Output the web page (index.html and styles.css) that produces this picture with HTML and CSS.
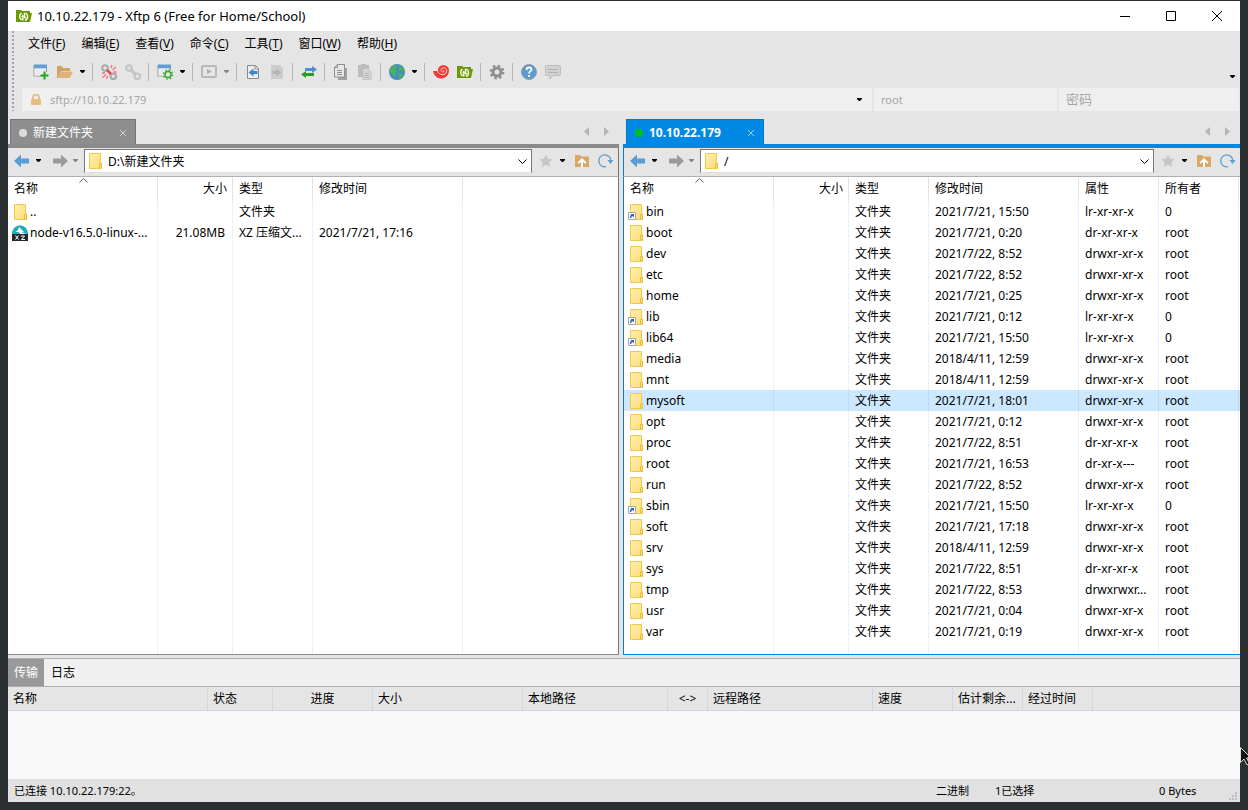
FILE: index.html
```html
<!DOCTYPE html>
<html lang="zh-CN">
<head>
    <meta charset="UTF-8">
    <meta name="viewport" content="width=device-width, initial-scale=1.0">
    <title>10.10.22.179 - Xftp 6</title>
    <link rel="stylesheet" href="styles.css">
</head>
<body>
    <!-- 图标 -->
    <svg class="sprite" aria-hidden="true">
        <linearGradient id="folderFill" x1="0" y1="0" x2="1" y2="1">
            <stop offset="0" stop-color="#ffeeae"/>
            <stop offset="1" stop-color="#ffdd75"/>
        </linearGradient>
        <symbol id="i-logo" viewBox="0 0 16 16">
            <path d="M0 2h5l1 1h8v2h2l-2 9H0z" fill="#6b9a08"/>
            <path d="M5.500 5.200C3 6.500 3 10.500 5.800 12M6.800 12.500V8M8.500 4.800v4.500M9 12.200c3.200-.8 3.500-5.500.5-7.200" fill="none" stroke="#fff" stroke-width="1.400"/>
            <path d="M5 9l1.800-2.500L8 8.500zM7.500 9h3L9 11z" fill="#fff"/>
        </symbol>
        <symbol id="i-new" viewBox="0 0 16 16">
            <path d="M1 1v11h8M13.500 1v7" fill="none" stroke="#969696"/>
            <path d="M1 .5h13v4H1z" fill="#5f9fd6"/>
            <path d="M1.500 4.500h11.500v4H9v3H1.500z" fill="#ececec"/>
            <path d="M11.500 7.500v8M7.500 11.500h8" stroke="#22a722" stroke-width="2"/>
        </symbol>
        <symbol id="i-open" viewBox="0 0 16 16">
            <path d="M0 2h5l1 2h7v3H4l-3 7H0z" fill="#d2a264"/>
            <path d="M4 7.500h12L13 14H1z" fill="#dfb27a"/>
        </symbol>
        <symbol id="i-cut" viewBox="0 0 16 16">
            <g fill="none" stroke="#a9a9a9" stroke-width="2">
                <circle cx="4" cy="4" r="2.800"/><circle cx="12.300" cy="12.300" r="2.800"/>
            </g>
            <path d="M6 6l4 4" stroke="#e0484d" stroke-width="2.500"/>
            <path d="M10 4l1-3M11.500 6l3.500-3M12.500 8h3M6.500 12l-1 3M5 10.500l-3.500 3M4 9H1" stroke="#ef7377" stroke-width="1.300"/>
        </symbol>
        <symbol id="i-link" viewBox="0 0 16 16">
            <g fill="none" stroke="#c4c4c4" stroke-width="2">
                <circle cx="4" cy="4" r="2.800"/><circle cx="12.300" cy="12.300" r="2.800"/>
                <path d="M5 5l6 6" stroke-width="3"/>
            </g>
        </symbol>
        <symbol id="i-props" viewBox="0 0 16 16">
            <path d="M1 1v11h6M13.500 1v5" fill="none" stroke="#969696"/>
            <path d="M1 .5h13v4H1z" fill="#5f9fd6"/>
            <path d="M1.500 4.500h11.500v3H7v4H1.500z" fill="#ececec"/>
            <circle cx="11" cy="10.500" r="3" fill="none" stroke="#3aa83a" stroke-width="1.500"/>
            <circle cx="11" cy="10.500" r="4.500" fill="none" stroke="#3aa83a" stroke-width="1.500" stroke-dasharray="1.700 1.830"/>
        </symbol>
        <symbol id="i-play" viewBox="0 0 16 16">
            <rect x="1" y="2" width="14" height="11" rx="1" fill="none" stroke="#b9b9b9" stroke-width="2"/>
            <path d="M6 5l5 2.500L6 10z" fill="#b0b0b0"/>
        </symbol>
        <symbol id="i-pageleft" viewBox="0 0 16 16">
            <path d="M2.500 1.500h8l3 3v10h-11z" fill="#ececec" stroke="#8b8b8b"/>
            <path d="M10 1.500v3.500h3.500" fill="none" stroke="#8b8b8b"/>
            <path d="M3.500 8.500l5-4v2.500h4v3h-4v2.500z" fill="#3e87cf"/>
        </symbol>
        <symbol id="i-pageright" viewBox="0 0 16 16">
            <path d="M2 1h9l3 3v11H2z" fill="#cdcdcd"/>
            <path d="M12.500 8.500l-5-4v2.500h-4v3h4v2.500z" fill="#b4b4b4"/>
        </symbol>
        <symbol id="i-sync" viewBox="0 0 16 16">
            <path d="M4 4h7V2l5 3.500L11 9V7H4z" fill="#4a90d2"/>
            <path d="M13 9H5V7l-5 3.500L5 14v-2h8z" fill="#24a124"/>
        </symbol>
        <symbol id="i-copy" viewBox="0 0 16 16">
            <path d="M5 4h9v12H5z" fill="#a2a2a2"/>
            <path d="M4.500.5H11.500v12.500H1.500V3.500z" fill="#e8e8e8" stroke="#8f8f8f"/>
            <path d="M1.500 3.500h3v-3M4 6.500h5M4 8.500h5M4 10.500h5" fill="none" stroke="#8f8f8f"/>
        </symbol>
        <symbol id="i-paste" viewBox="0 0 16 16">
            <path d="M1 1h3V0h5v1h3v12H1z" fill="#bdbdbd"/>
            <path d="M6 4.500h5l3 3V15.500H6z" fill="#d5d5d5" stroke="#c1c1c1"/>
            <path d="M8 9.500h4M8 11.500h4M8 13.500h4" stroke="#b5b5b5"/>
        </symbol>
        <symbol id="i-globe" viewBox="0 0 16 16">
            <circle cx="8" cy="8" r="8" fill="#4a88ca"/>
            <path d="M1 4.500l4-3.500 3-.5-1 2.500 1 1-2 1.500 2 2.500-1.500 1 .5 2-2 2.500-1.500-3L1 8zM10 2.500l3.500 0 2 4-1.500 1.500-1.500-1.500-2 .5-1-2zM9.500 9.500l3-1 1.500 2-1.500 3-2.500 1z" fill="#45b45a"/>
        </symbol>
        <symbol id="i-shell" viewBox="0 0 16 16">
            <path d="M0 7h4.500L6 9l5 2 4.500-4c.5 4-3 7-6.500 7.500C5 15 1 12 0 7z" fill="#ef3b36"/>
            <circle cx="10.500" cy="6.500" r="5.500" fill="#ef3b36"/>
            <path d="M4.500 7c1.500 3.500 5 4.500 7.500 3 3-2 1.800-6.300-1.500-6.200-2.700.2-3.200 3.700-.8 4.200 1.500.2 2-1.300.8-1.800" fill="none" stroke="#ffd3d0" stroke-width="1"/>
        </symbol>
        <symbol id="i-gear" viewBox="0 0 16 16">
            <circle cx="8" cy="8" r="4" fill="none" stroke="#8e8e8e" stroke-width="3"/>
            <circle cx="8" cy="8" r="6.300" fill="none" stroke="#8e8e8e" stroke-width="2.200" stroke-dasharray="2.470 2.470"/>
        </symbol>
        <symbol id="i-help" viewBox="0 0 16 16">
            <circle cx="8" cy="8" r="7.500" fill="#5b9ad2" stroke="#9a9a9a"/>
            <path d="M5.500 6c0-3.500 5-3 5-.5 0 1.700-2.500 1.700-2.500 4M8 11v2" fill="none" stroke="#fff" stroke-width="1.800"/>
        </symbol>
        <symbol id="i-chat" viewBox="0 0 16 16">
            <path d="M1.500 1.500h13q1 0 1 1v8q0 1-1 1H8L5 15v-3.500H1.500q-1 0-1-1v-8q0-1 1-1z" fill="#d2d2d2" stroke="#bdbdbd"/>
            <path d="M3 5.500h10M3 8.500h10" stroke="#b2b2b2"/>
        </symbol>
        <symbol id="i-lock" viewBox="0 0 12 12">
            <path d="M3 6V3.500a3 3 0 0 1 6 0V6" fill="none" stroke="#e5be86" stroke-width="1.800"/>
            <rect x="1" y="5" width="10" height="6" rx="1" fill="#e8bd7d"/>
        </symbol>
        <symbol id="i-caret" viewBox="0 0 5 3"><path d="M0 0h5v1L3 3H2L0 1z" fill="currentColor"/></symbol>
        <symbol id="i-back" viewBox="0 0 16 14">
            <path d="M0 7l7-6.500v4h8v5H7v4z" fill="#5b9ed6"/>
        </symbol>
        <symbol id="i-forward" viewBox="0 0 16 14">
            <path d="M16 7L9 .5v4H1v5h8v4z" fill="#9b9b9b"/>
        </symbol>
        <symbol id="i-star" viewBox="0 0 14 14">
            <path d="M7 .5l2 4.200 4.500.6-3.300 3.200.8 4.600-4-2.300-4 2.300.8-4.600L.5 5.300 5 4.700z" fill="#c6c6c6"/>
        </symbol>
        <symbol id="i-up" viewBox="0 0 14 12">
            <path d="M0 0h5l1 1.500h8V12H0z" fill="#d9a866"/>
            <path d="M7 3l4.500 4.500-1.200 1.200L8 6.800V12H6V6.800L3.700 8.700 2.500 7.500z" fill="#fff"/>
        </symbol>
        <symbol id="i-refresh" viewBox="0 0 16 14">
            <path d="M8 12.700A6 6 0 1 1 12.800 7" fill="none" stroke="#5b9ed6" stroke-width="1.300"/>
            <path d="M9.500 6h6L12.500 10z" fill="#5b9ed6"/>
        </symbol>
        <symbol id="i-folder" viewBox="0 0 16 16">
            <path d="M2.500.5h11v9.500h1v5.500h-12z" fill="url(#folderFill)" stroke="#efc84c"/>
            <path d="M12.500 15V10.500h2V15z" fill="#ffe48a" stroke="#e9bd3c"/>
        </symbol>
        <symbol id="i-link-folder" viewBox="0 0 16 16">
            <use href="#i-folder"/>
            <path d="M.5 8.500h7v7h-7z" fill="#fff" stroke="#a5a5a5"/>
            <path d="M2.500 14c0-1.500.5-2.500 2-3" fill="none" stroke="#2a62ad" stroke-width="1.500"/>
            <path d="M2.500 10H6v3.500z" fill="#2a62ad"/>
        </symbol>
        <symbol id="i-xz" viewBox="0 0 16 16">
            <path d="M0 9a8 8.700 0 0 1 16 0z" fill="#1faeb8"/>
            <path d="M7 2l5 5h-2.500l4.500 2H8.500L6.500 7H3.500L6 5z" fill="#fff"/>
            <path d="M0 9h16v7H0z" fill="#26292b"/>
            <path d="M3.500 10.500l3 4M6.500 10.500l-3 4M9 11h3.500L9.500 14.500H13" fill="none" stroke="#fff"/>
        </symbol>
        <symbol id="i-chevron" viewBox="0 0 9 5"><path d="M.5.5l4 4 4-4" fill="none" stroke="currentColor"/></symbol>
        <symbol id="i-close" viewBox="0 0 10 10"><path d="M0 0l10 10M10 0L0 10" stroke="currentColor" fill="none"/></symbol>
        <symbol id="i-left" viewBox="0 0 5 9"><path d="M5 0v9L0 4.500z" fill="#b5b5b5"/></symbol>
        <symbol id="i-right" viewBox="0 0 5 9"><path d="M0 0v9l5-4.500z" fill="#b5b5b5"/></symbol>
    </svg>

    <div class="window">
        <header class="titlebar">
            <svg class="icon"><use href="#i-logo"/></svg>
            <h1>10.10.22.179 - Xftp 6 (Free for Home/School)</h1>
            <button class="win-btn" aria-label="最小化"><svg width="10" height="10"><path d="M0 5.500h10" stroke="#000"/></svg></button>
            <button class="win-btn" aria-label="最大化"><svg width="10" height="10"><path d="M.5.5h9v9h-9z" fill="none" stroke="#000"/></svg></button>
            <button class="win-btn" aria-label="关闭"><svg width="10" height="10"><use href="#i-close"/></svg></button>
        </header>

        <!-- 菜单 -->
        <nav class="menubar grip">
            <button>文件(<u>F</u>)</button>
            <button>编辑(<u>E</u>)</button>
            <button>查看(<u>V</u>)</button>
            <button>命令(<u>C</u>)</button>
            <button>工具(<u>T</u>)</button>
            <button>窗口(<u>W</u>)</button>
            <button>帮助(<u>H</u>)</button>
        </nav>

        <div class="tools grip">
            <div class="toolbar">
                <button class="tool" aria-label="新建"><svg class="icon"><use href="#i-new"/></svg></button>
                <button class="tool" aria-label="打开"><svg class="icon"><use href="#i-open"/></svg></button>
                <button class="drop" aria-label="打开列表"><svg class="caret"><use href="#i-caret"/></svg></button>
                <span class="sep"></span>
                <button class="tool" aria-label="断开"><svg class="icon"><use href="#i-cut"/></svg></button>
                <button class="tool" aria-label="重新连接"><svg class="icon"><use href="#i-link"/></svg></button>
                <span class="sep"></span>
                <button class="tool" aria-label="属性"><svg class="icon"><use href="#i-props"/></svg></button>
                <button class="drop" aria-label="属性列表"><svg class="caret"><use href="#i-caret"/></svg></button>
                <span class="sep"></span>
                <button class="tool" aria-label="终端"><svg class="icon"><use href="#i-play"/></svg></button>
                <button class="drop dim" aria-label="终端列表"><svg class="caret"><use href="#i-caret"/></svg></button>
                <span class="sep"></span>
                <button class="tool" aria-label="向左传输"><svg class="icon"><use href="#i-pageleft"/></svg></button>
                <button class="tool" aria-label="向右传输"><svg class="icon"><use href="#i-pageright"/></svg></button>
                <span class="sep"></span>
                <button class="tool" aria-label="同步"><svg class="icon"><use href="#i-sync"/></svg></button>
                <span class="sep"></span>
                <button class="tool" aria-label="复制"><svg class="icon"><use href="#i-copy"/></svg></button>
                <button class="tool" aria-label="粘贴"><svg class="icon"><use href="#i-paste"/></svg></button>
                <span class="sep"></span>
                <button class="tool" aria-label="编码"><svg class="icon"><use href="#i-globe"/></svg></button>
                <button class="drop" aria-label="编码列表"><svg class="caret"><use href="#i-caret"/></svg></button>
                <span class="sep"></span>
                <button class="tool" aria-label="Xshell"><svg class="icon"><use href="#i-shell"/></svg></button>
                <button class="tool" aria-label="Xftp"><svg class="icon"><use href="#i-logo"/></svg></button>
                <span class="sep"></span>
                <button class="tool" aria-label="选项"><svg class="icon"><use href="#i-gear"/></svg></button>
                <span class="sep"></span>
                <button class="tool" aria-label="帮助"><svg class="icon"><use href="#i-help"/></svg></button>
                <button class="tool" aria-label="反馈"><svg class="icon"><use href="#i-chat"/></svg></button>
                <button class="drop overflow" aria-label="更多"><svg class="caret"><use href="#i-caret"/></svg></button>
            </div>
            <form class="address">
                <div class="field host">
                    <svg class="lock"><use href="#i-lock"/></svg>
                    <input type="text" value="sftp://10.10.22.179" aria-label="主机">
                    <button type="button" class="drop" aria-label="历史"><svg class="caret"><use href="#i-caret"/></svg></button>
                </div>
                <div class="field"><input type="text" value="root" aria-label="用户名"></div>
                <div class="field"><input type="password" placeholder="密码" aria-label="密码"></div>
            </form>
        </div>

        <main class="panes">
            <!-- 本地 -->
            <section class="pane local">
                <div class="tabs">
                    <button class="tab"><span class="dot"></span>新建文件夹<svg class="tab-close"><use href="#i-close"/></svg></button>
                    <button class="scroll" aria-label="向左"><svg width="5" height="9"><use href="#i-left"/></svg></button>
                    <button class="scroll" aria-label="向右"><svg width="5" height="9"><use href="#i-right"/></svg></button>
                </div>
                <div class="navbar">
                    <button class="go" aria-label="后退"><svg width="16" height="14"><use href="#i-back"/></svg></button>
                    <button class="nav-drop" aria-label="后退列表"><svg class="caret"><use href="#i-caret"/></svg></button>
                    <button class="go" aria-label="前进"><svg width="16" height="14"><use href="#i-forward"/></svg></button>
                    <button class="nav-drop dim" aria-label="前进列表"><svg class="caret"><use href="#i-caret"/></svg></button>
                    <div class="path">
                        <svg class="icon"><use href="#i-folder"/></svg>
                        <input type="text" value="D:\新建文件夹" aria-label="本地路径">
                        <svg width="9" height="5"><use href="#i-chevron"/></svg>
                    </div>
                    <button class="star" aria-label="收藏"><svg width="14" height="14"><use href="#i-star"/></svg></button>
                    <button class="nav-drop" aria-label="收藏列表"><svg class="caret"><use href="#i-caret"/></svg></button>
                    <button class="up" aria-label="上级目录"><svg width="14" height="12"><use href="#i-up"/></svg></button>
                    <button class="refresh" aria-label="刷新"><svg width="16" height="14"><use href="#i-refresh"/></svg></button>
                </div>
                <table class="files">
                    <colgroup><col class="c-name"><col class="c-size"><col class="c-type"><col class="c-time"><col></colgroup>
                    <thead>
                        <tr><th>名称<svg class="sort"><use href="#i-chevron"/></svg></th><th class="num">大小</th><th>类型</th><th>修改时间</th><th></th></tr>
                    </thead>
                    <tbody>
                        <tr><td class="name"><svg class="icon"><use href="#i-folder"/></svg>..</td><td></td><td>文件夹</td><td></td><td></td></tr>
                        <tr><td class="name"><svg class="icon"><use href="#i-xz"/></svg>node-v16.5.0-linux-...</td><td class="num">21.08MB</td><td>XZ 压缩文...</td><td>2021/7/21, 17:16</td><td></td></tr>
                        <tr class="rest"><td></td><td></td><td></td><td></td><td></td></tr>
                    </tbody>
                </table>
            </section>

            <!-- 远程 -->
            <section class="pane remote">
                <div class="tabs">
                    <button class="tab"><span class="dot"></span>10.10.22.179<svg class="tab-close"><use href="#i-close"/></svg></button>
                    <button class="scroll" aria-label="向左"><svg width="5" height="9"><use href="#i-left"/></svg></button>
                    <button class="scroll" aria-label="向右"><svg width="5" height="9"><use href="#i-right"/></svg></button>
                </div>
                <div class="navbar">
                    <button class="go" aria-label="后退"><svg width="16" height="14"><use href="#i-back"/></svg></button>
                    <button class="nav-drop" aria-label="后退列表"><svg class="caret"><use href="#i-caret"/></svg></button>
                    <button class="go" aria-label="前进"><svg width="16" height="14"><use href="#i-forward"/></svg></button>
                    <button class="nav-drop dim" aria-label="前进列表"><svg class="caret"><use href="#i-caret"/></svg></button>
                    <div class="path">
                        <svg class="icon"><use href="#i-folder"/></svg>
                        <input type="text" value="/" aria-label="远程路径">
                        <svg width="9" height="5"><use href="#i-chevron"/></svg>
                    </div>
                    <button class="star" aria-label="收藏"><svg width="14" height="14"><use href="#i-star"/></svg></button>
                    <button class="nav-drop" aria-label="收藏列表"><svg class="caret"><use href="#i-caret"/></svg></button>
                    <button class="up" aria-label="上级目录"><svg width="14" height="12"><use href="#i-up"/></svg></button>
                    <button class="refresh" aria-label="刷新"><svg width="16" height="14"><use href="#i-refresh"/></svg></button>
                </div>
                <table class="files">
                    <colgroup><col class="c-name"><col class="c-size"><col class="c-type"><col class="c-time"><col class="c-attr"><col class="c-owner"><col></colgroup>
                    <thead>
                        <tr><th>名称<svg class="sort"><use href="#i-chevron"/></svg></th><th class="num">大小</th><th>类型</th><th>修改时间</th><th>属性</th><th>所有者</th><th></th></tr>
                    </thead>
                    <tbody id="remoteFiles"></tbody>
                </table>
            </section>
        </main>

        <!-- 传输 -->
        <section class="transfer">
            <div class="transfer-tabs">
                <button class="active">传输</button>
                <button>日志</button>
            </div>
            <table class="jobs">
                <colgroup>
                    <col class="j-name"><col class="j-state"><col class="j-progress"><col class="j-size"><col class="j-local">
                    <col class="j-dir"><col class="j-remote"><col class="j-speed"><col class="j-left"><col class="j-time"><col>
                </colgroup>
                <thead>
                    <tr><th>名称</th><th>状态</th><th class="center">进度</th><th>大小</th><th>本地路径</th><th class="center">&lt;-&gt;</th><th>远程路径</th><th>速度</th><th>估计剩余...</th><th>经过时间</th><th></th></tr>
                </thead>
            </table>
        </section>

        <footer class="status">
            <span class="message">已连接 10.10.22.179:22。</span>
            <span class="mode">二进制</span>
            <span class="selected">1已选择</span>
            <span class="bytes">0 Bytes</span>
            <svg width="8" height="8"><path d="M6 0h2v2H6zM3 3h2v2H3zM6 3h2v2H6zM0 6h2v2H0zM3 6h2v2H3zM6 6h2v2H6z" fill="#bcbcbc"/></svg>
        </footer>
    </div>
    <svg class="pointer" width="12" height="20"><path d="M.5.5v15l3.500-3.500 3 6 2.500-1.500-3-5.500H11z" fill="#111" stroke="#ddd"/></svg>

    <script>
        // 远程目录: 名称, 修改时间, 属性, 所有者
        const files = [
            ['bin', '2021/7/21, 15:50', 'lr-xr-xr-x', '0'],
            ['boot', '2021/7/21, 0:20', 'dr-xr-xr-x', 'root'],
            ['dev', '2021/7/22, 8:52', 'drwxr-xr-x', 'root'],
            ['etc', '2021/7/22, 8:52', 'drwxr-xr-x', 'root'],
            ['home', '2021/7/21, 0:25', 'drwxr-xr-x', 'root'],
            ['lib', '2021/7/21, 0:12', 'lr-xr-xr-x', '0'],
            ['lib64', '2021/7/21, 15:50', 'lr-xr-xr-x', '0'],
            ['media', '2018/4/11, 12:59', 'drwxr-xr-x', 'root'],
            ['mnt', '2018/4/11, 12:59', 'drwxr-xr-x', 'root'],
            ['mysoft', '2021/7/21, 18:01', 'drwxr-xr-x', 'root'],
            ['opt', '2021/7/21, 0:12', 'drwxr-xr-x', 'root'],
            ['proc', '2021/7/22, 8:51', 'dr-xr-xr-x', 'root'],
            ['root', '2021/7/21, 16:53', 'dr-xr-x---', 'root'],
            ['run', '2021/7/22, 8:52', 'drwxr-xr-x', 'root'],
            ['sbin', '2021/7/21, 15:50', 'lr-xr-xr-x', '0'],
            ['soft', '2021/7/21, 17:18', 'drwxr-xr-x', 'root'],
            ['srv', '2018/4/11, 12:59', 'drwxr-xr-x', 'root'],
            ['sys', '2021/7/22, 8:51', 'dr-xr-xr-x', 'root'],
            ['tmp', '2021/7/22, 8:53', 'drwxrwxr...', 'root'],
            ['usr', '2021/7/21, 0:04', 'drwxr-xr-x', 'root'],
            ['var', '2021/7/21, 0:19', 'drwxr-xr-x', 'root']
        ];

        const rows = files.map(([name, time, attr, owner]) => {
            const icon = attr[0] === 'l' ? 'i-link-folder' : 'i-folder';
            return `
                <tr class="${name === 'mysoft' ? 'selected' : ''}">
                    <td class="name"><svg class="icon"><use href="#${icon}"/></svg>${name}</td>
                    <td></td><td>文件夹</td><td>${time}</td><td>${attr}</td><td>${owner}</td><td></td>
                </tr>`;
        });
        document.getElementById('remoteFiles').innerHTML = rows.join('') +
            '<tr class="rest">' + '<td></td>'.repeat(7) + '</tr>';
    </script>
</body>
</html>
```
FILE: styles.css
```css
* {
    box-sizing: border-box;
}
body {
    margin: 0;
    height: 100vh;
    padding: 1px 8px 8px;
    overflow: hidden;
    background-color: #2a2f31;
    font-family: "Noto Sans", "Noto Sans CJK SC", sans-serif;
    font-size: 12px;
    line-height: 16px;
    color: #000;
}
button, input {
    font: inherit;
    color: inherit;
    margin: 0;
    padding: 0;
    border: none;
    background: none;
}
input {
    width: 0;
    min-width: 0;
    flex: 1;
    outline: none;
}
svg {
    display: block;
    flex: none;
}
.sprite {
    position: absolute;
    width: 0;
    height: 0;
}
.icon {
    width: 16px;
    height: 16px;
}
.caret {
    width: 5px;
    height: 3px;
}
.window {
    height: 100%;
    display: flex;
    flex-direction: column;
    background-color: #e5e5e5;
}

/* 标题栏 */
.titlebar {
    display: flex;
    align-items: center;
    height: 30px;
    padding-left: 8px;
    background-color: #fff;
}
.titlebar h1 {
    flex: 1;
    margin: 0 0 0 5px;
    font-size: 13px;
    font-weight: normal;
}
.win-btn {
    display: flex;
    align-items: center;
    justify-content: center;
    width: 46px;
    height: 30px;
}

/* 菜单和工具栏 */
.grip {
    margin-left: 4px;
    background: radial-gradient(circle at 1px 1px, #a3a3a3 1px, transparent 1px) 0 0 / 4px 4px repeat-y;
}
.menubar {
    display: flex;
    height: 25px;
    padding-left: 8px;
}
.menubar button {
    padding: 0 8px;
}
.menubar u {
    text-underline-offset: 2px;
}
.tools {
    margin-top: 2px;
    padding-left: 10px;
}
.toolbar {
    display: flex;
    align-items: center;
    height: 30px;
    padding: 0 6px 3px 7px;
}
.tool {
    display: flex;
    justify-content: center;
    width: 24px;
}
.drop {
    display: flex;
    justify-content: center;
    width: 11px;
}
.dim {
    color: #858585;
}
.sep {
    width: 1px;
    height: 18px;
    margin: 0 4px 0 3px;
    background-color: #b8b8b8;
}
.drop + .sep {
    margin-left: 4px;
}
.overflow {
    align-self: flex-end;
    margin: 0 -4px 7px auto;
}
.address {
    display: grid;
    grid-template-columns: 850fr 183fr 180fr;
    gap: 2px;
    height: 23px;
    padding-right: 1px;
    color: #a6a6a6;
    font-size: 11px;
}
.field {
    display: flex;
    align-items: center;
    min-width: 0;
    padding: 0 7px;
    background-color: #efefef;
}
.field input::placeholder {
    color: #a6a6a6;
    font-size: 13px;
}
.host .drop {
    color: #000;
}
.lock {
    width: 12px;
    height: 12px;
    margin: 0 8px 0 1px;
}

/* 文件窗格 */
.panes {
    flex: 1;
    min-height: 0;
    display: grid;
    grid-template-columns: 611fr 617fr;
    gap: 4px;
    padding-top: 8px;
}
.pane {
    display: flex;
    flex-direction: column;
    min-width: 0;
    min-height: 0;
}
.tabs {
    display: flex;
    height: 29px;
    padding: 0 3px 0 2px;
    border-bottom: 4px solid;
}
.tab {
    display: flex;
    align-items: center;
    width: 126px;
    margin-right: auto;
    padding: 2px 9px 0 8px;
    border: 1px solid;
    border-bottom: none;
    color: #fff;
}
.dot {
    width: 8px;
    height: 8px;
    margin-right: 6px;
    border-radius: 50%;
    background-color: #dcdcdc;
}
.tab-close {
    width: 6px;
    height: 6px;
    margin-left: auto;
}
.scroll {
    display: flex;
    align-items: center;
    justify-content: center;
    width: 20px;
}
.local .tabs {
    border-color: #8a8a8a;
}
.local .tab {
    background-color: #8e8e8e;
    border-color: #757575;
}
.local .navbar, .local .files {
    border-right: 1px solid #757575;
}
.local {
    border-bottom: 1px solid #8a8a8a;
}
.remote .navbar, .remote .files {
    border-left: 1px solid #0080d4;
}
.remote {
    border-bottom: 1px solid #0089e4;
}
.remote .tabs {
    padding-left: 3px;
    border-color: #0089e4;
}
.remote .tab {
    width: 138px;
    background-color: #0089e4;
    border-color: #0079ce;
    font-weight: bold;
}
.remote .dot {
    background-color: #00c011;
}
.navbar {
    display: flex;
    align-items: center;
    height: 29px;
    padding: 1px 4px 4px 6px;
    border-bottom: 1px solid #b0b0b0;
}
.go {
    width: 16px;
}
.nav-drop {
    display: flex;
    justify-content: center;
    width: 18px;
}
.go + .nav-drop {
    width: 22px;
    padding-right: 5px;
}
.go + .nav-drop.dim {
    width: 16px;
    padding-right: 2px;
}
.path {
    flex: 1;
    display: flex;
    align-items: center;
    min-width: 0;
    height: 24px;
    padding: 1px 4px 0 2px;
    border: 1px solid #787878;
    border-bottom-color: #e0e0e0;
    background-color: #fff;
}
.path input {
    padding: 2px 0 0 5px;
}
.star {
    margin-left: 7px;
}
.up {
    margin-left: 4px;
}
.refresh {
    margin-left: 9px;
}

.files, .jobs {
    width: 100%;
    table-layout: fixed;
    border-collapse: separate;
    border-spacing: 0;
}
.files {
    flex: 1;
    min-height: 0;
    height: 100%;
    background-color: #fff;
}
.c-name, .c-time {
    width: 150px;
}
.c-size {
    width: 75px;
}
.c-type, .c-attr, .c-owner {
    width: 80px;
}
th {
    font-weight: normal;
    text-align: left;
}
.files th, .files td {
    height: 21px;
    padding: 0 6px;
    border-right: 1px solid #e8f1fc;
    white-space: nowrap;
    overflow: hidden;
}
.files th {
    position: relative;
    height: 24px;
    border-color: #e3e3e3;
}
.files th:last-child, .files td:last-child {
    padding: 0;
    border-right: none;
}
.files .num {
    padding-right: 5px;
    text-align: right;
}
.files td.num {
    padding-right: 7px;
}
.files .rest td {
    height: auto;
}
.files .name {
    padding: 0 0 0 4px;
}
.name .icon {
    display: inline-block;
    vertical-align: top;
    margin-right: 2px;
}
.sort {
    position: absolute;
    top: 1px;
    left: 50%;
    width: 9px;
    height: 5px;
    margin-left: -4px;
    color: #555;
    transform: rotate(180deg);
}
.files .selected {
    background-color: #cce8ff;
}
.files .selected td {
    border-color: #b9dcfa;
}

/* 传输列表 */
.transfer {
    height: 121px;
    margin-top: 3px;
    border-top: 1px solid #b0b0b0;
    background-color: #f8f8f8;
}
.transfer-tabs {
    display: flex;
    height: 28px;
    border-bottom: 1px solid #b0b0b0;
    background-color: #f0f0f0;
}
.transfer-tabs button {
    padding: 0 7px;
}
.transfer-tabs .active {
    padding: 0 6px;
    background-color: #999;
    color: #fff;
}
.jobs th {
    height: 24px;
    padding: 0 5px;
    border-right: 1px solid #d0d8e8;
    border-bottom: 1px solid #d0d8e8;
    background-color: #e5e5e5;
    white-space: nowrap;
}
.jobs th:last-child {
    border-right: none;
}
.jobs .center {
    text-align: center;
}
.j-name { width: 200px; }
.j-state { width: 65px; }
.j-progress { width: 100px; }
.j-size { width: 150px; }
.j-local { width: 145px; }
.j-dir { width: 40px; }
.j-remote { width: 165px; }
.j-speed { width: 80px; }
.j-left, .j-time { width: 70px; }

/* 状态栏 */
.status {
    display: flex;
    align-items: center;
    height: 23px;
    padding: 0 3px 0 6px;
    background-color: #e1e1e1;
    font-size: 11px;
}
.status .message {
    flex: 1;
}
.status .mode {
    width: 59px;
}
.status .selected {
    width: 164px;
}
.status .bytes {
    width: 70px;
}
.status svg {
    align-self: flex-end;
    margin-bottom: 2px;
}
.pointer {
    position: absolute;
    top: 747px;
    right: -4px;
}
```
